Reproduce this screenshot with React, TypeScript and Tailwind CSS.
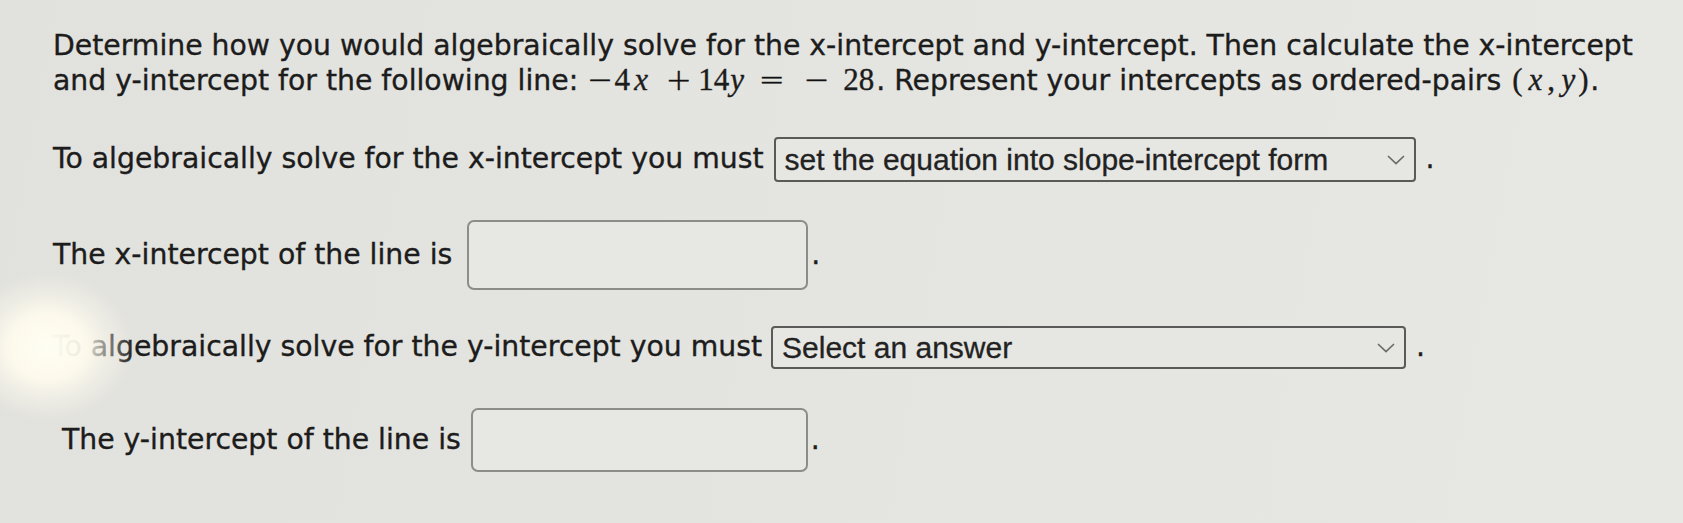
const Chevron = () => (
  <svg width="18" height="10" viewBox="0 0 18 10" fill="none" stroke="#6a6a6a" strokeWidth="1.7" strokeLinecap="round">
    <path d="M1.5 1.5 L9 8.5 L16.5 1.5" />
  </svg>
);

function Select({ label, className }: { label: string; className: string }) {
  return (
    <div
      className={`flex items-center justify-between rounded-[4px] border-2 border-[#5a5a58] bg-[#e6e6e2] pl-[9px] pr-[9px] ${className}`}
    >
      <span className="font-['Liberation_Sans',Arial,sans-serif] text-[30px] leading-none text-[#222] [-webkit-text-stroke:0.3px_#222]">
        {label}
      </span>
      <Chevron />
    </div>
  );
}

function AnswerBox({ className }: { className: string }) {
  return <div className={`rounded-[7px] border-2 border-[#8c8c89] bg-[#e7e7e3] ${className}`} />;
}

// math glyphs, laid out like the rendered TeX
const m = "inline-block text-center leading-[0] font-['Liberation_Serif','Times_New_Roman',serif] text-[31px]";
const op = "inline-block text-center leading-[0] font-['DejaVu_Sans',sans-serif] font-extralight text-[31px] text-[#0e0e0e] [-webkit-text-stroke:0.5px_#1c1c1c]";

export default function App() {
  return (
    <div className="relative min-h-[523px] w-full overflow-hidden bg-[linear-gradient(100deg,#e1e1dd_0%,#e4e4e0_50%,#e7e7e4_100%)] font-['DejaVu_Sans',sans-serif] text-[28.3px] text-[#1c1c1c] [-webkit-text-stroke:0.35px_#1c1c1c]">
      <div className="flex flex-col pl-[53px] pt-[28px]">
        <p className="leading-[35px] whitespace-nowrap">
          Determine how you would algebraically solve for the x-intercept and y-intercept. Then calculate the x-intercept
          <br />
          and y-intercept for the following line:
          <span className={`${op} ml-[9px] w-[18px]`}>−</span>
          <span className={`${m} ml-[9px] w-[16px]`}>4</span>
          <span className={`${m} ml-[1px] w-[20px] italic`}>x</span>
          <span className={`${op} ml-[14px] w-[27px]`}>+</span>
          <span className={`${m} ml-[6px] w-[31px]`}>14</span>
          <span className={`${m} w-[16px] italic`}>y</span>
          <span className={`${op} ml-[13px] w-[27px]`}>=</span>
          <span className={`${op} ml-[18px] w-[27px]`}>−</span>
          <span className={`${m} ml-[13px] w-[31px]`}>28</span>
          <span className="ml-[2px]">.</span> Represent your intercepts as ordered-pairs
          <span className={`${m} ml-[11px] w-[10px]`}>(</span>
          <span className={`${m} ml-[3px] w-[20px] italic`}>x</span>
          <span className={`${m} ml-[2px] w-[6px]`}>,</span>
          <span className={`${m} ml-[7px] w-[16px] italic`}>y</span>
          <span className={`${m} ml-[2px] w-[10px]`}>)</span>
          <span className="ml-[2px]">.</span>
        </p>

        <div className="mt-[39px] flex h-[45px] items-center">
          <span className="whitespace-nowrap">To algebraically solve for the x-intercept you must</span>
          <Select label="set the equation into slope-intercept form" className="ml-[10px] h-[45px] w-[642px]" />
          <span className="ml-[10px]">.</span>
        </div>

        <div className="mt-[38px] flex items-center">
          <span className="whitespace-nowrap">The x-intercept of the line is</span>
          <AnswerBox className="ml-[15px] h-[70px] w-[341px]" />
          <span className="ml-[3px]">.</span>
        </div>

        <div className="-ml-[1px] mt-[36px] flex h-[43px] items-center">
          <span className="whitespace-nowrap">To algebraically solve for the y-intercept you must</span>
          <Select label="Select an answer" className="ml-[9px] h-[43px] w-[635px]" />
          <span className="ml-[10px]">.</span>
        </div>

        <div className="ml-[9px] mt-[39px] flex items-center">
          <span className="whitespace-nowrap">The y-intercept of the line is</span>
          <AnswerBox className="ml-[10px] h-[64px] w-[337px]" />
          <span className="ml-[3px]">.</span>
        </div>
      </div>

      <div className="pointer-events-none absolute left-[-40px] top-[272px] h-[150px] w-[175px] rounded-full bg-[radial-gradient(closest-side,rgba(255,254,242,1)_0%,rgba(255,252,238,0.92)_42%,rgba(252,249,236,0.45)_70%,rgba(250,248,236,0)_100%)]" />
    </div>
  );
}
